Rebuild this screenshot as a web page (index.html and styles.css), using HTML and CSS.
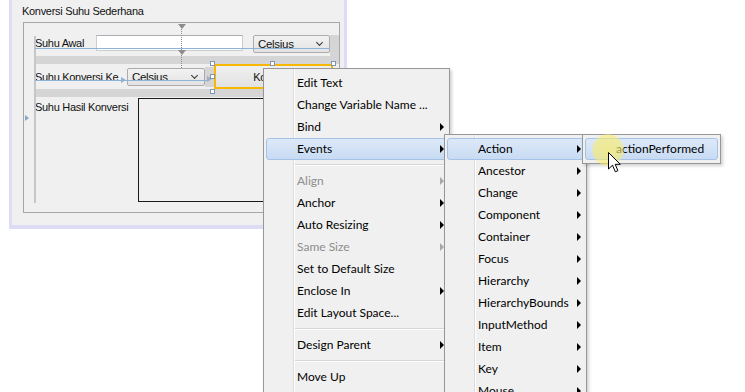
FILE: index.html
```html
<!DOCTYPE html>
<html lang="id">
  <head>
    <meta charset="utf-8" />
    <meta name="viewport" content="width=device-width, initial-scale=1" />
    <title>Konversi Suhu Sederhana</title>
    <link rel="stylesheet" href="styles.css">
  </head>
  <body>
    <div class="frame">
      <div class="frame-title">Konversi Suhu Sederhana</div>
      <div class="panel">
        <div class="row row-awal">
          <span class="lbl lbl-awal">Suhu Awal</span>
          <span class="field"></span>
          <span class="combo combo-awal">Celsius<span class="chev"></span></span>
          <span class="space-col"></span>
        </div>
        <div class="band"></div>
        <div class="row row-ke">
          <span class="lbl lbl-ke">Suhu Konversi Ke</span>
          <span class="combo combo-ke">Celsius<span class="chev"></span></span>
          <span class="space-col space-small"></span>
          <span class="btn btn-selected">Konversi</span>
        </div>
        <div class="band"></div>
        <div class="row row-hasil">
          <span class="lbl lbl-hasil">Suhu Hasil Konversi</span>
          <span class="area"></span>
        </div>

        <!-- designer guides drawn over the form -->
        <div class="guide-v"></div>
        <div class="baseline baseline-1"></div>
        <div class="baseline baseline-2"></div>
        <div class="tri-right tri-ke"></div>
        <div class="tri-right tri-gap"></div>
        <div class="guide-dotted"></div>
        <div class="tri-down tri-top"></div>
        <div class="tri-down tri-mid"></div>
        <div class="anchor"></div>
        <div class="handle h1"></div>
        <div class="handle h2"></div>
        <div class="handle h3"></div>
        <div class="handle h4"></div>
        <div class="handle h5"></div>
      </div>
    </div>

    <ul class="menu menu-main">
      <li class="item">Edit Text</li>
      <li class="item">Change Variable Name ...</li>
      <li class="item sub">Bind</li>
      <li class="item sub active">Events</li>
      <li class="sep"></li>
      <li class="item sub disabled">Align</li>
      <li class="item sub">Anchor</li>
      <li class="item sub">Auto Resizing</li>
      <li class="item sub disabled">Same Size</li>
      <li class="item">Set to Default Size</li>
      <li class="item sub">Enclose In</li>
      <li class="item">Edit Layout Space...</li>
      <li class="sep"></li>
      <li class="item sub">Design Parent</li>
      <li class="sep"></li>
      <li class="item">Move Up</li>
      <li class="item empty"></li>
    </ul>

    <ul class="menu menu-events">
      <li class="item sub active">Action</li>
      <li class="item sub">Ancestor</li>
      <li class="item sub">Change</li>
      <li class="item sub">Component</li>
      <li class="item sub">Container</li>
      <li class="item sub">Focus</li>
      <li class="item sub">Hierarchy</li>
      <li class="item sub">HierarchyBounds</li>
      <li class="item sub">InputMethod</li>
      <li class="item sub">Item</li>
      <li class="item sub">Key</li>
      <li class="item sub">Mouse</li>
    </ul>

    <ul class="menu menu-action">
      <li class="item active">actionPerformed</li>
    </ul>

    <div class="click-glow"></div>
    <svg class="cursor" width="14" height="22" viewBox="0 0 14 22">
      <path d="M0.5 0.5 L0.5 17 L4.5 13.2 L7.3 19.8 L9.9 18.7 L7.2 12.3 L12.3 12.3 Z" fill="#fff" stroke="#000" stroke-width="1" stroke-linejoin="round" />
    </svg>
  </body>
</html>
```

FILE: styles.css
```css
body {
  margin: 0;
  height: 392px;
  overflow: hidden;
  position: relative;
  background: #fff;
  font-family: "Liberation Sans", Arial, sans-serif;
  font-size: 11px;
  letter-spacing: -0.3px;
  color: #111;
}

/* form designer frame */
.frame {
  margin-left: 9px;
  width: 338px;
  height: 229px;
  box-sizing: border-box;
  background: #f0f0f0;
  border: solid #dcdcf6;
  border-width: 0 3px 4px 3px;
}
.frame-title {
  padding: 4px 0 0 10px;
  line-height: 14px;
}
.panel {
  position: relative;
  margin: 4px 0 0 11px;
  width: 317px;
  height: 191px;
  box-sizing: border-box;
  border: 1px solid #a6a6a6;
  padding: 12px 0 0 11px;
}
.row {
  display: flex;
  align-items: flex-start;
}
.row-awal {
  height: 21px;
}
.row-ke {
  height: 25px;
  align-items: center;
}
.row-hasil {
  height: 105px;
}
.lbl {
  line-height: 16px;
  white-space: nowrap;
}
.lbl-awal {
  width: 61px;
}
.lbl-ke {
  width: 92px;
}
.lbl-hasil {
  width: 103px;
  margin-top: 2px;
}
.field {
  width: 147px;
  height: 16px;
  box-sizing: border-box;
  background: #fff;
  border: 1px solid #c9ced6;
  border-top-color: #abadb3;
}
.combo {
  display: flex;
  align-items: center;
  justify-content: space-between;
  height: 18px;
  box-sizing: border-box;
  padding: 0 7px 0 4px;
  background: linear-gradient(#f2f2f2, #e3e3e3);
  border: 1px solid #acacac;
  border-radius: 2px;
  font-size: 11.5px;
}
.combo-awal {
  width: 77px;
  margin-left: 10px;
}
.combo-ke {
  width: 78px;
}
.chev {
  width: 4px;
  height: 4px;
  margin-top: -3px;
  border-right: 1.5px solid #333;
  border-bottom: 1.5px solid #333;
  transform: rotate(45deg);
}
.space-col {
  width: 9px;
  height: 21px;
  background: #d5d5d5;
}
.space-small {
  height: 20px;
}
.band {
  width: 304px;
  height: 8px;
  background: #d5d5d5;
}
.btn {
  width: 119px;
  height: 25px;
  box-sizing: border-box;
  display: flex;
  align-items: center;
  justify-content: center;
  background: linear-gradient(#f0f0f0, #e2e2e2);
}
.btn-selected {
  border: 2px solid #f6b800;
}
.area {
  width: 192px;
  height: 104px;
  margin-top: 1px;
  box-sizing: border-box;
  border: 1px solid #1a1a1a;
}

/* guides, anchors and selection handles */
.guide-v,
.baseline,
.tri-right,
.tri-down,
.guide-dotted,
.anchor,
.handle {
  position: absolute;
}
.guide-v {
  left: 10px;
  top: 13px;
  width: 2px;
  height: 167px;
  background: #c6c6c6;
}
.baseline {
  left: 11px;
  height: 1px;
  background: #8db3d9;
}
.baseline-1 {
  top: 25px;
  width: 295px;
}
.baseline-2 {
  top: 57px;
  width: 172px;
}
.tri-right {
  width: 0;
  height: 0;
  border-left: 5px solid #8db3d9;
  border-top: 3px solid transparent;
  border-bottom: 3px solid transparent;
}
.tri-ke {
  left: 97px;
  top: 54px;
}
.tri-gap {
  left: 183px;
  top: 53px;
  border-left-color: #9aaec6;
}
.guide-dotted {
  left: 157px;
  top: 1px;
  height: 44px;
  border-left: 1px dotted #8a8a8a;
}
.tri-down {
  left: 154px;
  width: 0;
  height: 0;
  border-top: 5px solid #8c8c8c;
  border-left: 4px solid transparent;
  border-right: 4px solid transparent;
}
.tri-top {
  top: 1px;
}
.tri-mid {
  top: 27px;
}
.anchor {
  left: 1px;
  top: 92px;
  width: 0;
  height: 0;
  border-left: 4px solid #8aa4c4;
  border-top: 3px solid transparent;
  border-bottom: 3px solid transparent;
}
.handle {
  width: 5px;
  height: 5px;
  box-sizing: border-box;
  background: #fff;
  border: 1px solid #8096b4;
}
.h1 { left: 186px; top: 38px; }
.h2 { left: 246px; top: 38px; }
.h3 { left: 307px; top: 38px; }
.h4 { left: 186px; top: 51px; }
.h5 { left: 186px; top: 66px; }

/* context menus */
.menu {
  position: absolute;
  margin: 0;
  padding: 3px 2px;
  list-style: none;
  box-sizing: border-box;
  border: 1px solid #979797;
  background: linear-gradient(to right, transparent 29px, #dcdcdc 29px, #dcdcdc 30px, #fff 30px, #fff 31px, transparent 31px), #f0f0f0;
  box-shadow: 2px 2px 3px rgba(0, 0, 0, 0.18);
  font-family: Lato, "Noto Sans", sans-serif;
  font-size: 12px;
  letter-spacing: 0;
  color: #000;
}
.menu-main {
  left: 263px;
  top: 68px;
  width: 187px;
}
.menu-events {
  left: 444px;
  top: 134px;
  width: 143px;
}
.menu-action {
  left: 582px;
  top: 134px;
  width: 139px;
}
.item {
  position: relative;
  height: 22px;
  box-sizing: border-box;
  padding-left: 30px;
  line-height: 20px;
  border: 1px solid transparent;
  border-radius: 3px;
  white-space: nowrap;
}
.item.active {
  background: linear-gradient(#dde9f8, #c8dbf3);
  border-color: #a5c3e9;
}
.item.disabled {
  color: #8d8d8d;
}
.item.sub::after {
  content: "";
  position: absolute;
  right: 2px;
  top: 6px;
  border-left: 4px solid #000;
  border-top: 4px solid transparent;
  border-bottom: 4px solid transparent;
}
.item.disabled::after {
  border-left-color: #a8a8a8;
}
.sep {
  height: 10px;
  margin-left: 29px;
  background: linear-gradient(transparent 4px, #d7d7d7 4px, #d7d7d7 5px, #fff 5px, #fff 6px, transparent 6px);
}

/* mouse pointer with click highlight */
.click-glow {
  position: absolute;
  left: 592px;
  top: 134px;
  width: 32px;
  height: 32px;
  border-radius: 50%;
  background: radial-gradient(circle, rgba(248, 236, 110, 0.75) 0, rgba(248, 236, 110, 0.6) 60%, rgba(248, 236, 110, 0) 100%);
}
.cursor {
  position: absolute;
  left: 608px;
  top: 152px;
}
```
